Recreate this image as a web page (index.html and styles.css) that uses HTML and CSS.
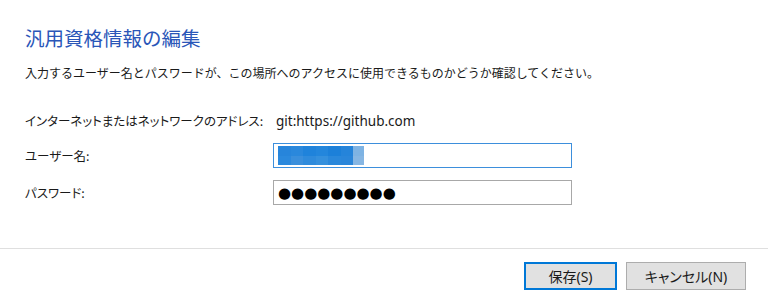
FILE: index.html
```html
<!DOCTYPE html>
<html lang="ja">
<head>
<meta charset="utf-8">
<title>汎用資格情報の編集</title>
<link rel="stylesheet" href="styles.css">
</head>
<body>
<div class="dialog">
  <div class="content">
    <h1 class="title">汎用資格情報の編集</h1>
    <p class="desc">入力するユーザー名とパスワードが、この場所へのアクセスに使用できるものかどうか確認してください。</p>
    <div class="form">
      <div class="label">インターネットまたはネットワークのアドレス:</div>
      <div class="value">git:https://github.com</div>
      <div class="label">ユーザー名:</div>
      <div class="input focused">
        <div class="blur">
          <span class="px p1"></span><span class="px p2"></span><span class="px p3"></span><span class="px p4"></span><span class="px p5"></span><span class="px p6"></span><span class="px p7"></span>
        </div>
      </div>
      <div class="label">パスワード:</div>
      <div class="input"><span class="dots">●●●●●●●●●</span></div>
    </div>
  </div>
  <div class="footer">
    <button class="btn primary">保存(S)</button>
    <button class="btn">キャンセル(N)</button>
  </div>
</div>
</body>
</html>
```
FILE: styles.css
```css
html, body {
  margin: 0;
  padding: 0;
  background: #ffffff;
}
body {
  width: 768px;
  height: 304px;
  overflow: hidden;
  font-family: "Noto Sans", "Noto Sans CJK JP", sans-serif;
  color: #1a1a1a;
}
.dialog {
  display: flex;
  flex-direction: column;
  height: 304px;
}
.content {
  height: 248px;
  box-sizing: border-box;
  padding: 25px 0 0 25px;
}
.title {
  margin: 0;
  font-family: "Noto Sans CJK JP", sans-serif;
  font-weight: 400;
  font-size: 19.5px;
  line-height: 26px;
  color: #2a56b8;
}
.desc {
  margin: 14px 0 0 0;
  font-family: "Noto Sans CJK JP", sans-serif;
  font-size: 12px;
  line-height: 16px;
  color: #1a1a1a;
}
.form {
  display: grid;
  grid-template-columns: 248px 299px;
  grid-template-rows: 20px 25px 25px;
  row-gap: 12px;
  margin-top: 30px;
  align-items: center;
}
.label {
  font-family: "Noto Sans CJK JP", sans-serif;
  font-size: 12.5px;
  line-height: 20px;
  white-space: nowrap;
  font-feature-settings: "palt";
}
.value {
  font-family: "Noto Sans", sans-serif;
  font-size: 13.5px;
  line-height: 20px;
  padding-left: 3px;
  color: #1a1a1a;
}
.input {
  box-sizing: border-box;
  height: 25px;
  border: 1px solid #a8a8a8;
  display: flex;
  align-items: center;
  padding-left: 4px;
}
.input.focused {
  border-color: #3d8fdc;
}
.blur {
  display: flex;
  height: 19px;
}
.px {
  display: block;
  width: 12.5px;
  height: 19px;
}
.p1 { background: linear-gradient(#2785db 50%, #2b89dd 50%); }
.p2 { background: linear-gradient(#2a88dc 50%, #3a8fdc 50%); }
.p3 { background: linear-gradient(#1f83db 50%, #2f8bdc 50%); }
.p4 { background: linear-gradient(#2386dc 50%, #3590dd 50%); }
.p5 { background: linear-gradient(#1c80d9 50%, #2a88db 50%); }
.p6 { background: linear-gradient(#2584da 50%, #2a86da 50%); }
.p7 { background: linear-gradient(#7eb3e3 50%, #86b6e3 50%); width: 11px; }
.dots {
  font-family: "DejaVu Sans", sans-serif;
  font-size: 15px;
  line-height: 20px;
  color: #000;
}
.footer {
  flex: 1;
  border-top: 1px solid #dfdfdf;
  display: flex;
  justify-content: flex-end;
  align-items: flex-start;
  gap: 9px;
  padding: 13px 22px 0 0;
}
.btn {
  box-sizing: border-box;
  height: 28px;
  margin: 0;
  padding: 0;
  background: #e1e1e1;
  border: 1px solid #adadad;
  font-family: "Noto Sans", "Noto Sans CJK JP", sans-serif;
  font-size: 14px;
  font-feature-settings: "palt";
  color: #1a1a1a;
  width: 120px;
}
.btn.primary {
  width: 93px;
  border: 2px solid #0078d7;
}
```
